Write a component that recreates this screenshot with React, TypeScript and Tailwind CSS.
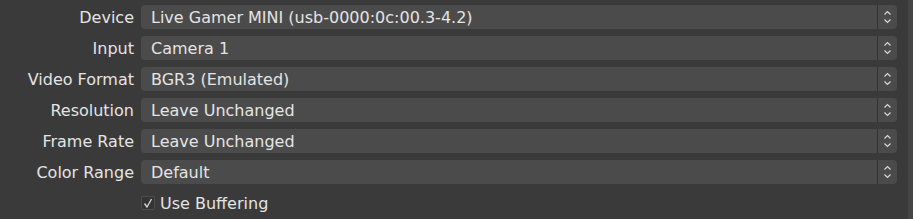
import React from "react";

const rows: [string, string][] = [
  ["Device", "Live Gamer MINI (usb-0000:0c:00.3-4.2)"],
  ["Input", "Camera 1"],
  ["Video Format", "BGR3 (Emulated)"],
  ["Resolution", "Leave Unchanged"],
  ["Frame Rate", "Leave Unchanged"],
  ["Color Range", "Default"],
];

function Arrows() {
  return (
    <svg width="9" height="14" viewBox="0 0 9 14" className="text-[#d8d8d8]">
      <path d="M1.5 4.5 L4.5 1.5 L7.5 4.5" fill="none" stroke="currentColor" strokeWidth="1.2" />
      <path d="M1.5 9.5 L4.5 12.5 L7.5 9.5" fill="none" stroke="currentColor" strokeWidth="1.2" />
    </svg>
  );
}

export default function App() {
  return (
    <div
      className="w-[913px] h-[219px] bg-[#3a3a3a] flex text-[16px] text-[#e4e4e4] overflow-hidden"
      style={{ fontFamily: '"DejaVu Sans", sans-serif' }}
    >
      <div className="flex-1 flex flex-col pt-[5px] gap-[7px]">
        {rows.map(([label, value]) => (
          <div key={label} className="flex items-center h-[24px]">
            <div className="w-[134px] text-right leading-none pt-[2px]">{label}</div>
            <div className="ml-[7px] w-[756px] h-[24px] bg-[#4b4b4b] rounded-[4px] flex items-center">
              <div className="flex-1 pl-[10px] leading-none pt-[2px]">{value}</div>
              <div className="w-[20px] h-full border-l border-[#333333] flex items-center justify-center">
                <Arrows />
              </div>
            </div>
          </div>
        ))}
        <div className="flex items-center h-[24px] pl-[141px]">
          <div className="w-[14px] h-[14px] bg-[#343434] border border-[#4d4d4d] rounded-[2px] flex items-center justify-center">
            <svg width="12" height="12" viewBox="0 0 12 12">
              <path d="M2.5 6.5 L5 10 L9.5 2" fill="none" stroke="#d8d8d8" strokeWidth="1.3" />
            </svg>
          </div>
          <div className="ml-[5px] leading-none pt-[2px]">Use Buffering</div>
        </div>
      </div>
      <div className="w-[5px] h-full bg-[#454545]" />
    </div>
  );
}
